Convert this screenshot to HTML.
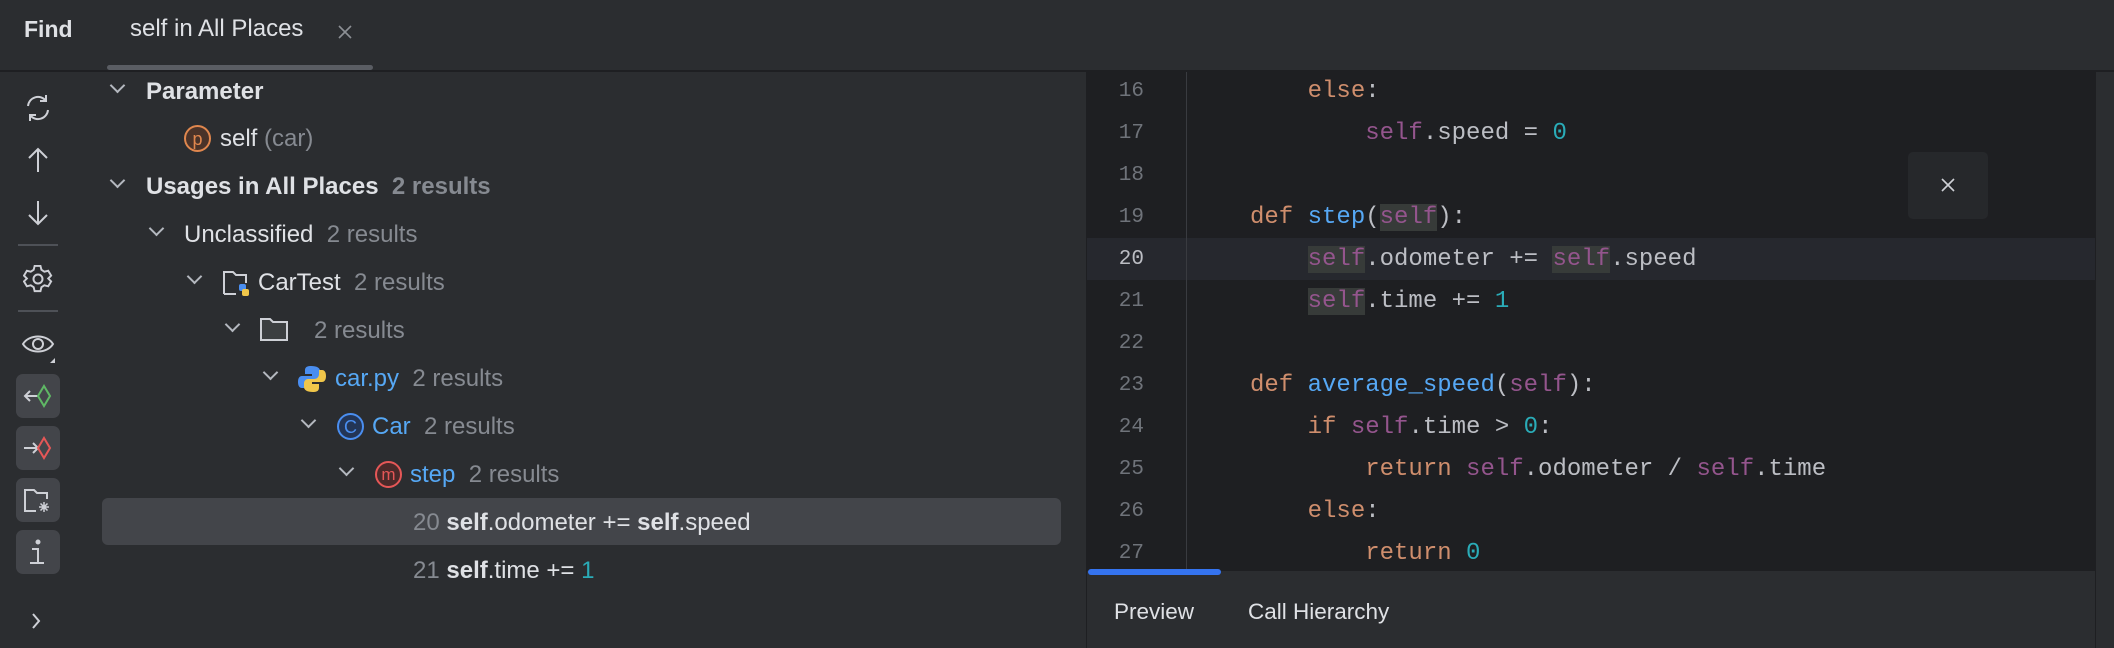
<!DOCTYPE html>
<html><head><meta charset="utf-8"><style>
*{margin:0;padding:0;box-sizing:border-box}
body{width:2114px;height:648px;background:#2b2d30;font-family:"Liberation Sans",sans-serif;color:#dfe1e5;position:relative;overflow:hidden}
.a{position:absolute;white-space:pre}
.t{font-size:24px;line-height:48px;height:48px}
.g{color:#868a91}
.b{font-weight:bold}
.blue{color:#56a8f5}
.chev{position:absolute;width:11px;height:11px;border-right:2px solid #b4b8bf;border-bottom:2px solid #b4b8bf;transform:rotate(45deg)}
.code{font-family:"Liberation Mono",monospace;font-size:24px;line-height:42px;height:42px;color:#bcbec4}
.ln{font-family:"Liberation Mono",monospace;font-size:21px;line-height:42px;color:#6f737a;width:60px;text-align:right}
.k{color:#cf8e6d}.s{color:#94558d}.n{color:#2aacb8}.f{color:#56a8f5}
.hl{background:#373b39}
.btn{position:absolute;left:16px;width:44px;height:44px;border-radius:7px;background:#43454a}
</style></head><body>
<!-- header -->
<div class="a b" style="left:24px;top:16px;font-size:23px;color:#dfe1e5">Find</div>
<div class="a" style="left:130px;top:15px;font-size:24px;color:#dfe1e5">self in All Places</div>
<svg class="a" style="left:337px;top:24px" width="16" height="16"><path d="M2 2L14 14M14 2L2 14" stroke="#8c8f94" stroke-width="1.6"/></svg>
<div class="a" style="left:107px;top:65px;width:266px;height:5px;background:#5a5d63;border-radius:3px"></div>
<div class="a" style="left:0;top:70px;width:2114px;height:2px;background:#1e1f22"></div>

<!-- toolbar -->
<svg class="a" style="left:22px;top:92px" width="32" height="32" fill="none" stroke="#ced0d6" stroke-width="2"><path d="M6 14a10 10 0 0 1 18-5M26 18a10 10 0 0 1-18 5"/><path d="M24 3v6h-6M8 29v-6h6"/></svg>
<svg class="a" style="left:26px;top:146px" width="24" height="28" fill="none" stroke="#ced0d6" stroke-width="2"><path d="M12 26V3M3 12l9-9 9 9"/></svg>
<svg class="a" style="left:26px;top:199px" width="24" height="28" fill="none" stroke="#ced0d6" stroke-width="2"><path d="M12 2v23M3 16l9 9 9-9"/></svg>
<div class="a" style="left:18px;top:244px;width:40px;height:2px;background:#4e5157"></div>
<svg class="a" style="left:23px;top:264px" width="30" height="30" fill="none" stroke="#ced0d6" stroke-width="2"><path d="M12 3h6l1 4 3 2 4-1 3 5-3 3v0l3 3-3 5-4-1-3 2-1 4h-6l-1-4-3-2-4 1-3-5 3-3-3-3 3-5 4 1 3-2z" transform="translate(0,-1) scale(0.97)"/><circle cx="15" cy="15" r="4.5"/></svg>
<div class="a" style="left:18px;top:310px;width:40px;height:2px;background:#4e5157"></div>
<svg class="a" style="left:21px;top:330px" width="36" height="34" fill="none" stroke="#ced0d6" stroke-width="2"><path d="M2 14c6-10 24-10 30 0c-6 10-24 10-30 0z"/><circle cx="17" cy="14" r="5"/><path d="M34 28l-5 5h5z" fill="#ced0d6" stroke="none"/></svg>
<div class="btn" style="top:374px"></div>
<svg class="a" style="left:22px;top:382px" width="32" height="30" fill="none" stroke-width="2"><path d="M16 14H3M8 9l-5 5 5 5" stroke="#ced0d6"/><path d="M22 4l6 10-6 10-6-10z" stroke="#5fb865"/></svg>
<div class="btn" style="top:426px"></div>
<svg class="a" style="left:22px;top:434px" width="32" height="30" fill="none" stroke-width="2"><path d="M2 14h14M11 9l5 5-5 5" stroke="#ced0d6"/><path d="M22 4l6 10-6 10-6-10z" stroke="#e55757"/></svg>
<div class="btn" style="top:478px"></div>
<svg class="a" style="left:22px;top:486px" width="32" height="30" fill="none" stroke-width="2"><path d="M14 25H3V4h9l3 3h10v6" stroke="#ced0d6"/><path d="M22 16v10M17 21h10M18.5 17.5l7 7M25.5 17.5l-7 7" stroke="#ced0d6" stroke-width="1.5"/></svg>
<div class="btn" style="top:530px"></div>
<svg class="a" style="left:26px;top:538px" width="24" height="30" fill="none" stroke="#ced0d6" stroke-width="2"><circle cx="12" cy="4" r="1.5" fill="#ced0d6"/><path d="M6 11h6v14M4 25h14"/></svg>
<svg class="a" style="left:30px;top:612px" width="12" height="18" fill="none" stroke="#ced0d6" stroke-width="2"><path d="M3 2l6 7-6 7"/></svg>

<!-- tree -->
<div class="a" style="left:102px;top:498px;width:959px;height:47px;background:#43454a;border-radius:6px"></div>
<div class="chev" style="left:112px;top:80px"></div>
<div class="a t b" style="left:146px;top:68px">Parameter</div>
<svg class="a" style="left:183px;top:124px" width="29" height="29"><circle cx="14.5" cy="14.5" r="12.5" fill="#4a3329" stroke="#e0874e" stroke-width="2"/><text x="14.5" y="21" font-size="18" fill="#e0874e" text-anchor="middle" font-family="Liberation Sans">p</text></svg>
<div class="a t" style="left:220px;top:115px">self <span class="g">(car)</span></div>
<div class="chev" style="left:112px;top:175px"></div>
<div class="a t b" style="left:146px;top:163px">Usages in All Places  <span class="g">2 results</span></div>
<div class="chev" style="left:151px;top:223px"></div>
<div class="a t" style="left:184px;top:211px">Unclassified  <span class="g">2 results</span></div>
<div class="chev" style="left:189px;top:271px"></div>
<svg class="a" style="left:222px;top:268px" width="30" height="30" fill="none"><path d="M2 26V4h9l3 3h10v8" stroke="#ced0d6" stroke-width="2"/><path d="M2 26h12" stroke="#ced0d6" stroke-width="2"/><rect x="17" y="16" width="7" height="7" rx="2" fill="#4a8ef0"/><rect x="20" y="21" width="7" height="7" rx="2" fill="#f0c64a"/></svg>
<div class="a t" style="left:258px;top:259px">CarTest  <span class="g">2 results</span></div>
<div class="chev" style="left:227px;top:319px"></div>
<svg class="a" style="left:259px;top:316px" width="30" height="28" fill="none"><path d="M2 24V3h9l3 3h14v18z" stroke="#ced0d6" stroke-width="2" fill="#3c3f41"/></svg>
<div class="a t g" style="left:314px;top:307px">2 results</div>
<div class="chev" style="left:265px;top:367px"></div>
<svg class="a" style="left:297px;top:364px" width="30" height="30"><path d="M14 2c-6 0-6 3-6 5v3h7v2H5c-3 0-4 3-4 6s1 6 4 6h3v-4c0-3 2-5 5-5h6c2 0 4-2 4-4V7c0-3-3-5-9-5z" fill="#4a8ef0"/><path d="M16 28c6 0 6-3 6-5v-3h-7v-2h10c3 0 4-3 4-6s-1-6-4-6h-3v4c0 3-2 5-5 5h-6c-2 0-4 2-4 4v4c0 3 3 5 9 5z" fill="#f0c64a"/></svg>
<div class="a t" style="left:335px;top:355px"><span class="blue">car.py</span>  <span class="g">2 results</span></div>
<div class="chev" style="left:303px;top:415px"></div>
<svg class="a" style="left:336px;top:412px" width="29" height="29"><circle cx="14.5" cy="14.5" r="12.5" fill="#233556" stroke="#4a8ef0" stroke-width="2"/><text x="14.5" y="21" font-size="18" fill="#4a8ef0" text-anchor="middle" font-family="Liberation Sans">C</text></svg>
<div class="a t" style="left:372px;top:403px"><span class="blue">Car</span>  <span class="g">2 results</span></div>
<div class="chev" style="left:341px;top:463px"></div>
<svg class="a" style="left:374px;top:460px" width="29" height="29"><circle cx="14.5" cy="14.5" r="12.5" fill="#4a2a2a" stroke="#e55757" stroke-width="2"/><text x="14.5" y="20" font-size="17" fill="#e55757" text-anchor="middle" font-family="Liberation Sans">m</text></svg>
<div class="a t" style="left:410px;top:451px"><span class="blue">step</span>  <span class="g">2 results</span></div>
<div class="a t" style="left:413px;top:499px"><span class="g">20</span> <b>self</b>.odometer += <b>self</b>.speed</div>
<div class="a t" style="left:413px;top:547px"><span class="g">21</span> <b>self</b>.time += <span style="color:#2aacb8">1</span></div>

<!-- editor -->
<div class="a" style="left:1087px;top:72px;width:1008px;height:499px;background:#1e1f22"></div>
<div class="a" style="left:1087px;top:238px;width:1008px;height:42px;background:#26282e"></div>
<div class="a" style="left:1186px;top:72px;width:1px;height:499px;background:#393b40"></div>
<div class="a" style="left:1086px;top:72px;width:1px;height:576px;background:#1e1f22"></div>
<div class="a ln" style="left:1084px;top:71px">16<br>17<br>18<br>19<br><span style="color:#bcbec4">20</span><br>21<br>22<br>23<br>24<br>25<br>26<br>27</div>
<div class="a code" style="left:1250px;top:71px">    <span class="k">else</span>:</div>
<div class="a code" style="left:1250px;top:113px">        <span class="s">self</span>.speed = <span class="n">0</span></div>
<div class="a code" style="left:1250px;top:197px"><span class="k">def</span> <span class="f">step</span>(<span class="s hl">self</span>):</div>
<div class="a code" style="left:1250px;top:239px">    <span class="s hl">self</span>.odometer += <span class="s hl">self</span>.speed</div>
<div class="a code" style="left:1250px;top:281px">    <span class="s hl">self</span>.time += <span class="n">1</span></div>
<div class="a code" style="left:1250px;top:365px"><span class="k">def</span> <span class="f">average_speed</span>(<span class="s">self</span>):</div>
<div class="a code" style="left:1250px;top:407px">    <span class="k">if</span> <span class="s">self</span>.time &gt; <span class="n">0</span>:</div>
<div class="a code" style="left:1250px;top:449px">        <span class="k">return</span> <span class="s">self</span>.odometer / <span class="s">self</span>.time</div>
<div class="a code" style="left:1250px;top:491px">    <span class="k">else</span>:</div>
<div class="a code" style="left:1250px;top:533px">        <span class="k">return</span> <span class="n">0</span></div>
<div class="a" style="left:1908px;top:152px;width:80px;height:67px;background:#26282b;border-radius:5px"></div>
<svg class="a" style="left:1940px;top:177px" width="16" height="16"><path d="M2 2L14 14M14 2L2 14" stroke="#ced0d6" stroke-width="1.6"/></svg>
<div class="a" style="left:1088px;top:569px;width:133px;height:6px;background:#3574f0;border-radius:3px"></div>
<div class="a" style="left:1114px;top:599px;font-size:22.5px;color:#dfe1e5">Preview</div>
<div class="a" style="left:1248px;top:599px;font-size:22.5px;color:#dfe1e5">Call Hierarchy</div>
<div class="a" style="left:2095px;top:72px;width:1px;height:576px;background:#1e1f22"></div>
</body></html>
